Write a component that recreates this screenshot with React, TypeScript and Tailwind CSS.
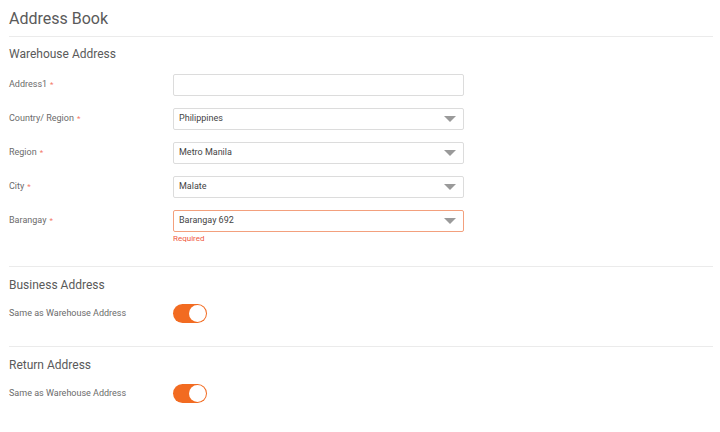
import React from 'react';

const Caret = () => (
    <svg width="12" height="6" viewBox="0 0 12 6" className="shrink-0">
        <path d="M0 0 L12 0 L6 6 Z" fill="#9a9a9a" />
    </svg>
);

function Field({ label, value, select, error }: { label: string; value?: string; select?: boolean; error?: string }) {
    return (
        <div className="flex h-[34px] items-start">
            <div className="flex h-[22px] w-[164px] items-center text-[9px] text-[#6b6b6b]">
                {label}
                <span className="ml-[3px] text-[8px] text-[#f47a6a]">*</span>
            </div>
            <div className="relative">
                <div
                    className={`flex h-[22px] w-[291px] items-center justify-between rounded-[2px] border bg-white pl-[5px] pr-[7px] text-[9px] text-[#444] ${
                        error ? 'border-[#f3a07d]' : 'border-[#dcdcdc]'
                    }`}
                >
                    <span>{value}</span>
                    {select && <Caret />}
                </div>
                {error && <div className="absolute left-0 top-[24px] text-[8px] leading-[10px] text-[#f0583c]">{error}</div>}
            </div>
        </div>
    );
}

function Toggle() {
    return (
        <div className="flex h-[19px] w-[34px] items-center justify-end rounded-full bg-[#f26b21] pr-[1px]">
            <div className="h-[17px] w-[17px] rounded-full bg-white" />
        </div>
    );
}

function SwitchSection({ title }: { title: string }) {
    return (
        <div className="border-t border-[#ebebeb]">
            <div className="mt-[11px] text-[12px] leading-[14px] text-[#5a5a5a]">{title}</div>
            <div className="mt-[12px] flex h-[19px] items-center">
                <div className="w-[164px] text-[9px] text-[#6b6b6b]">Same as Warehouse Address</div>
                <Toggle />
            </div>
        </div>
    );
}

export default function App() {
    return (
        <div className="h-[432px] w-[720px] bg-white pl-[9px] pr-[7px] font-['Roboto',sans-serif]">
            <div className="flex h-[37px] items-center border-b border-[#ebebeb] pt-[1px] text-[16px] text-[#5a5a5a]">Address Book</div>

            <div className="pt-[10px]">
                <div className="text-[12px] leading-[14px] text-[#5a5a5a]">Warehouse Address</div>
                <div className="mt-[13px]">
                    <Field label="Address1" />
                    <Field label="Country/ Region" value="Philippines" select />
                    <Field label="Region" value="Metro Manila" select />
                    <Field label="City" value="Malate" select />
                    <Field label="Barangay" value="Barangay 692" select error="Required" />
                </div>
            </div>

            <div className="mt-[22px] h-[80px]">
                <SwitchSection title="Business Address" />
            </div>
            <SwitchSection title="Return Address" />
        </div>
    );
}
